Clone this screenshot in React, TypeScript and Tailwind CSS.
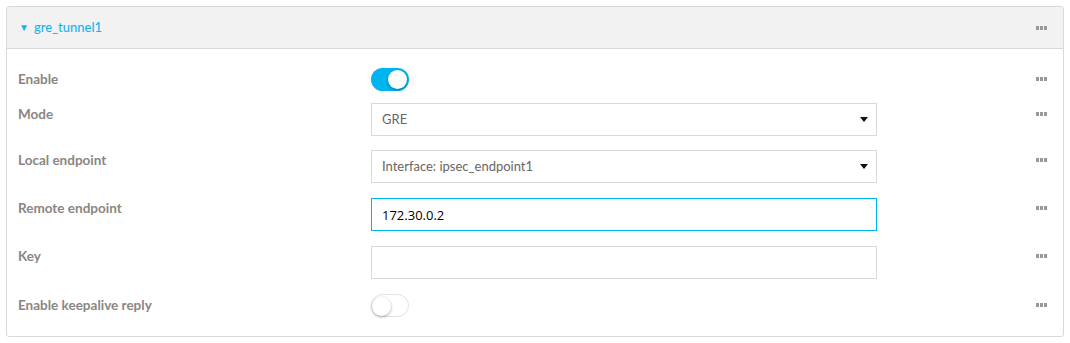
import { useState } from "react";

const font = { fontFamily: "Lato, 'Open Sans', sans-serif" };

function Dots() {
  return (
    <div className="flex gap-px">
      <span className="block w-[3px] h-[4px] bg-[#999]" />
      <span className="block w-[3px] h-[4px] bg-[#999]" />
      <span className="block w-[3px] h-[4px] bg-[#999]" />
    </div>
  );
}

function Toggle({ on }: { on: boolean }) {
  return (
    <div
      className={`relative w-[38px] h-[23px] rounded-full ${
        on ? "bg-[#00b4f0]" : "bg-white border border-[#e2e2e2]"
      }`}
    >
      <span
        className={`absolute top-[2px] w-[19px] h-[19px] rounded-full bg-white shadow-[0_1px_3px_rgba(0,0,0,0.35)] ${
          on ? "right-[2px]" : "left-0 top-[1px]"
        }`}
      />
    </div>
  );
}

function Select({ value }: { value: string }) {
  return (
    <div className="flex items-center justify-between h-[33px] w-[506px] border border-[#d9d9d9] bg-white pl-[10px] pr-[8px]">
      <span className="text-[13px] text-[#666]">{value}</span>
      <svg width="8" height="5" viewBox="0 0 8 5">
        <path d="M0 0h8L4 5z" fill="#111" />
      </svg>
    </div>
  );
}

function Row({
  label,
  children,
  labelTop,
  className,
}: {
  label: string;
  children: React.ReactNode;
  labelTop: string;
  className: string;
}) {
  return (
    <div className={`flex ${className}`}>
      <div
        className={`w-[353px] shrink-0 text-[13.5px] font-bold text-[#8a8683] leading-[18px] ${labelTop}`}
      >
        {label}
      </div>
      <div className="w-[506px] shrink-0">{children}</div>
      <div className={`flex-1 flex justify-end pr-[16px] ${labelTop}`}>
        <div className="h-[18px] flex items-center">
          <Dots />
        </div>
      </div>
    </div>
  );
}

export default function App() {
  const [remote, setRemote] = useState("172.30.0.2");
  return (
    <div className="w-[1070px] h-[343px] bg-white pt-[6px] px-[6px]" style={font}>
      <div className="w-[1058px] h-[331px] border border-[#d9d9d9] rounded-[3px] overflow-hidden">
        <div className="h-[42px] bg-[#f2f2f2] border-b border-[#d9d9d9] flex items-center justify-between pl-[12px] pr-[16px]">
          <div className="flex items-center gap-[5px] text-[13px] text-[#1ab2ee] font-medium">
            <span className="text-[10px]">▼</span>
            <span>gre_tunnel1</span>
          </div>
          <Dots />
        </div>
        <div className="pl-[11px] pt-[19px]">
          <Row label="Enable" labelTop="pt-[2px]" className="h-[35px]">
            <Toggle on />
          </Row>
          <Row label="Mode" labelTop="pt-[2px]" className="h-[47px]">
            <Select value="GRE" />
          </Row>
          <Row label="Local endpoint" labelTop="pt-[1px]" className="h-[48px]">
            <Select value="Interface: ipsec_endpoint1" />
          </Row>
          <Row label="Remote endpoint" labelTop="pt-[1px]" className="h-[48px]">
            <input
              value={remote}
              onChange={(e) => setRemote(e.target.value)}
              className="h-[33px] w-[506px] border border-[#00b4f0] px-[10px] text-[13px] text-black outline-none"
              style={{ fontFamily: "'Open Sans', sans-serif" }}
            />
          </Row>
          <Row label="Key" labelTop="pt-[1px]" className="h-[48px]">
            <div className="h-[33px] w-[506px] border border-[#d9d9d9]" />
          </Row>
          <Row label="Enable keepalive reply" labelTop="pt-[2px]" className="h-[30px]">
            <Toggle on={false} />
          </Row>
        </div>
      </div>
    </div>
  );
}
